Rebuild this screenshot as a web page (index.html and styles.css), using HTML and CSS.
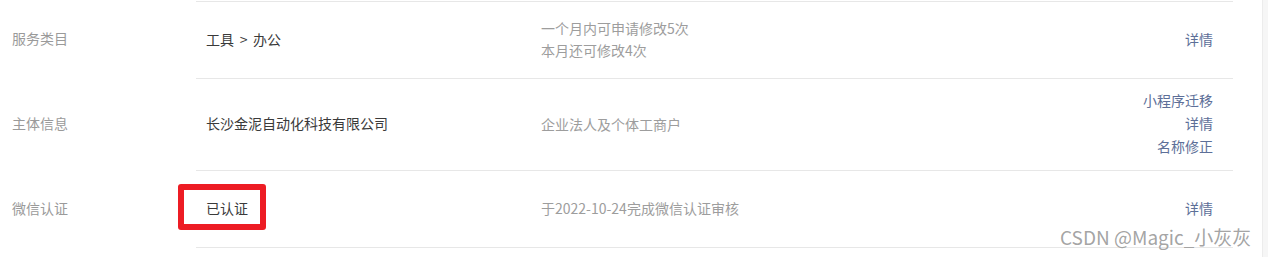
FILE: index.html
```html
<!DOCTYPE html>
<html lang="zh-CN">
<head>
<meta charset="utf-8">
<title>设置</title>
<link rel="stylesheet" href="styles.css">
</head>
<body>
<div class="page">
  <div class="main">
    <div class="row">
      <div class="label">服务类目</div>
      <div class="cells">
        <div class="value spaced">工具 &gt; 办公</div>
        <div class="desc"><div>一个月内可申请修改5次</div><div>本月还可修改4次</div></div>
        <div class="links"><a>详情</a></div>
      </div>
    </div>
    <div class="row">
      <div class="label">主体信息</div>
      <div class="cells">
        <div class="value">长沙金泥自动化科技有限公司</div>
        <div class="desc">企业法人及个体工商户</div>
        <div class="links"><a>小程序迁移</a><a>详情</a><a>名称修正</a></div>
      </div>
    </div>
    <div class="row last">
      <div class="label">微信认证</div>
      <div class="cells">
        <div class="value"><span class="mark">已认证</span></div>
        <div class="desc">于2022-10-24完成微信认证审核</div>
        <div class="links"><a>详情</a></div>
      </div>
    </div>
    <div class="watermark">CSDN @Magic_小灰灰</div>
  </div>
  <div class="scroll"></div>
</div>
</body>
</html>
```
FILE: styles.css
```css
html, body {
  margin: 0;
  padding: 0;
  background: #ffffff;
}
body {
  font-family: "Microsoft YaHei", "Noto Sans CJK SC", "Liberation Sans", sans-serif;
  font-size: 14px;
  line-height: 23px;
}
.page {
  display: flex;
  width: 1268px;
  height: 257px;
  overflow: hidden;
}
.main {
  position: relative;
  width: 1262px;
  padding-right: 29px;
  box-sizing: border-box;
}
.scroll {
  flex: 1;
  background: #f6f6f6;
  border-left: 1px solid #ececec;
}
.row {
  display: flex;
  align-items: stretch;
}
.label {
  width: 196px;
  padding-left: 12px;
  padding-bottom: 1px;
  box-sizing: border-box;
  color: #9a9a9a;
  display: flex;
  align-items: center;
}
.cells {
  flex: 1;
  display: flex;
  align-items: center;
  border-top: 1px solid #e7e7e7;
  padding: 10px 20px 12px 10px;
  min-height: 54px;
}
.row:first-child .cells {
  margin-top: 1px;
}
.row.last .cells {
  border-bottom: 1px solid #e7e7e7;
}
.value {
  width: 335px;
  color: #3a3a3a;
}
.spaced {
  word-spacing: 2.5px;
}
.desc {
  flex: 1;
  color: #9d9d9d;
  line-height: 22px;
}
.links {
  display: flex;
  flex-direction: column;
  align-items: flex-end;
}
.links a {
  color: #5d6f98;
  text-decoration: none;
}
.mark {
  position: relative;
}
.mark::before {
  content: "";
  position: absolute;
  left: -28px;
  top: -14px;
  width: 76px;
  height: 34px;
  border: 6px solid #ed1c24;
  border-radius: 3px;
}
.watermark {
  position: absolute;
  left: 1060px;
  top: 226px;
  font-family: "Microsoft YaHei", "Noto Sans CJK SC", "Liberation Sans", sans-serif;
  font-size: 19px;
  line-height: 22px;
  color: rgba(140, 140, 140, 0.8);
  white-space: nowrap;
  text-shadow: 0 0 1px #ffffff;
}
```
